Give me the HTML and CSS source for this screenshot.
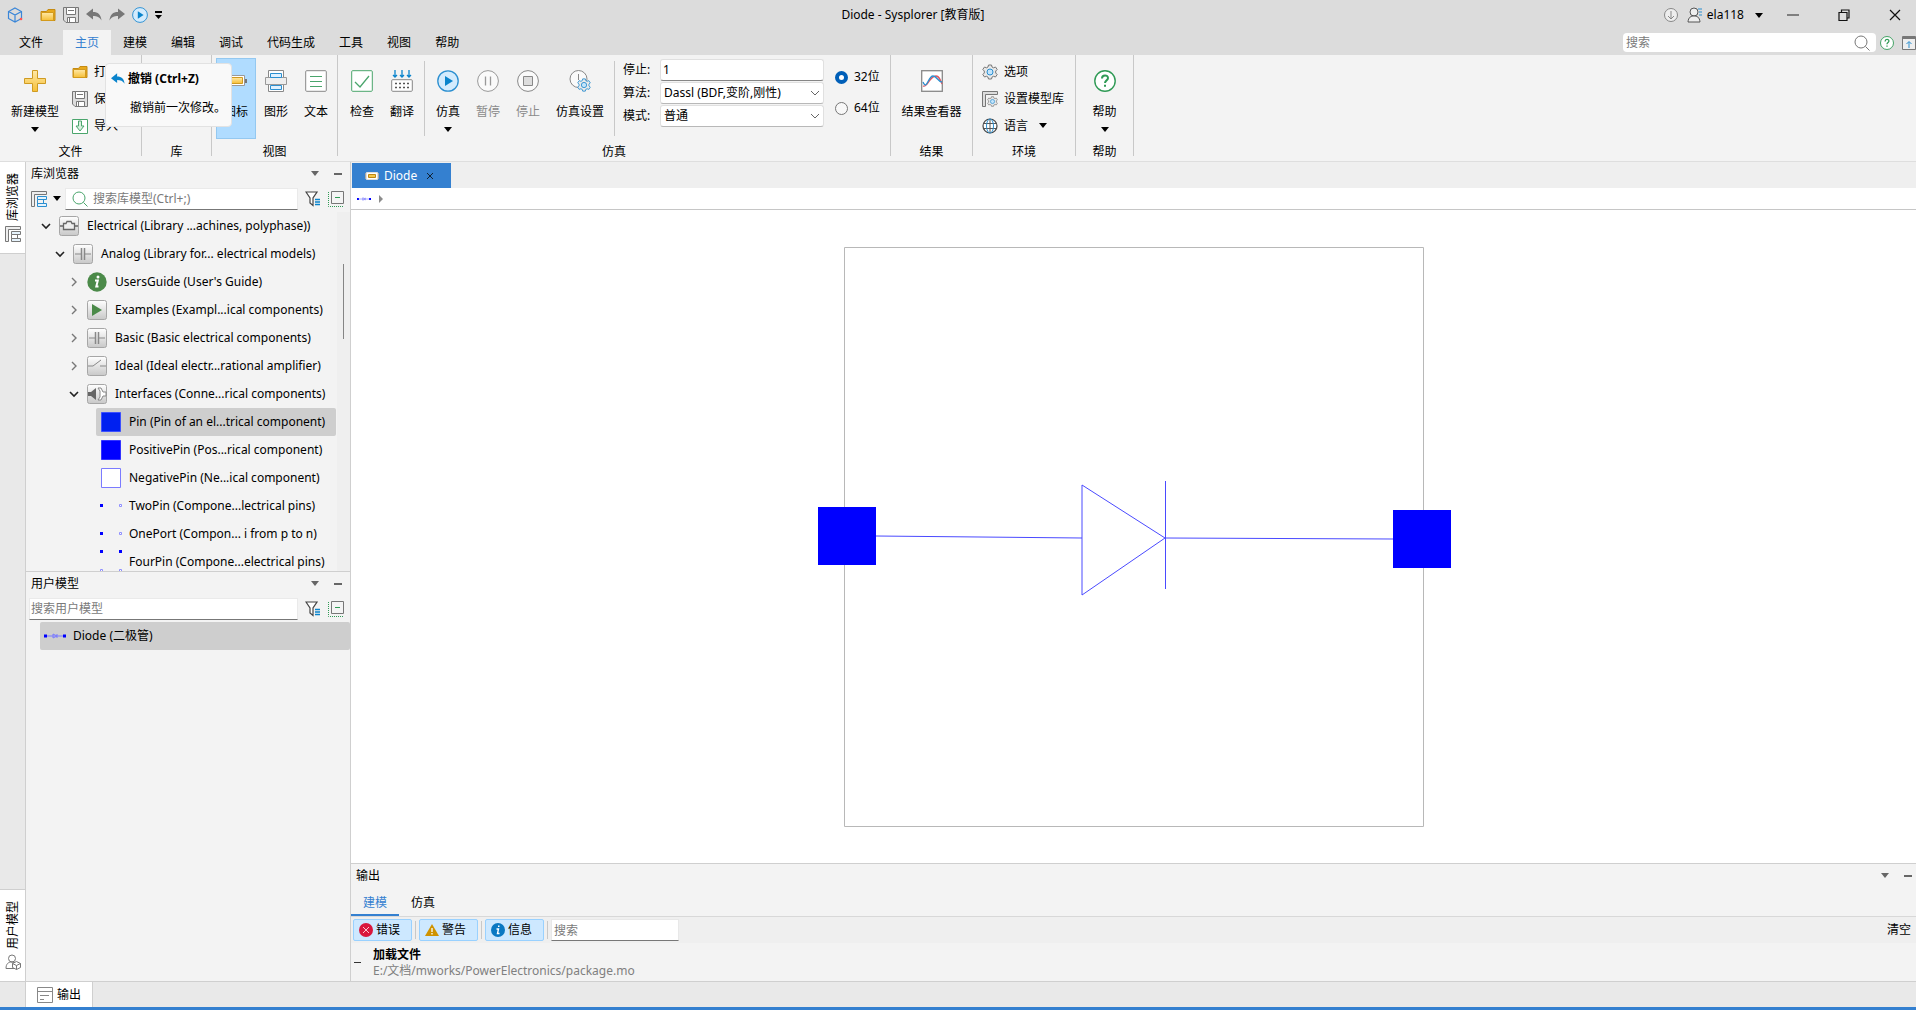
FILE: index.html
```html
<!DOCTYPE html>
<html lang="zh-CN">
<head>
    <meta charset="UTF-8">
    <meta name="viewport" content="width=device-width, initial-scale=1.0">
    <title>Diode - Sysplorer [教育版]</title>
    <link rel="stylesheet" href="styles.css">
</head>
<body>
    <!-- shared icons -->
    <svg class="sprite" aria-hidden="true">
        <defs>
            <linearGradient id="gold" x1="0" y1="0" x2="0" y2="1">
                <stop offset="0" stop-color="#ffe9a8"/>
                <stop offset="1" stop-color="#f6bf36"/>
            </linearGradient>
            <linearGradient id="grey" x1="0" y1="0" x2="0" y2="1">
                <stop offset="0" stop-color="#ffffff"/>
                <stop offset="1" stop-color="#c8c8c8"/>
            </linearGradient>
        </defs>
        <symbol id="folder" viewBox="0 0 16 16">
            <path d="M1 13.500V4.500h5.500l1.500-2h7v11z" fill="#e8a91c" stroke="#c58b12"/>
            <path d="M1.500 13.500V5.500h12v8z" fill="url(#gold)" stroke="#d39a1c"/>
        </symbol>
        <symbol id="save" viewBox="0 0 16 16">
            <path d="M.5 .5h15v15H3l-2.500-2.500z" fill="#ddd" stroke="#777"/>
            <path d="M3.500 .5h9v7h-9z" fill="#fff" stroke="#777"/>
            <path d="M4.500 15.500v-5h8v5zM6.500 11v4M5 3.500h6" fill="#fff" stroke="#777"/>
        </symbol>
        <symbol id="undo" viewBox="0 0 16 16">
            <path d="M0 7l7-5.500v3.500c5 0 8 2.500 8.500 8.500C13.500 10 11 9 7 9v3.500z" fill="currentColor"/>
        </symbol>
        <symbol id="play" viewBox="0 0 22 22">
            <circle cx="11" cy="11" r="10.200" fill="#d3ebfd" stroke="#2b8fd0" stroke-width="1.300"/>
            <path d="M8 6v10l8-5z" fill="#0a84cc"/>
        </symbol>
        <symbol id="arrow" viewBox="0 0 8 5"><path d="M0 0h8L4 5z" fill="currentColor"/></symbol>
        <symbol id="dash" viewBox="0 0 8 2"><path d="M0 0h8v2H0z" fill="currentColor"/></symbol>
        <symbol id="help" viewBox="0 0 22 22">
            <circle cx="11" cy="11" r="10.200" fill="#fff" stroke="#2f9a55" stroke-width="1.400"/>
            <path d="M8 8.500c0-4 6-4 6-.500 0 2.500-3 2.200-3 5M11 14.800v2" fill="none" stroke="#2f9a55" stroke-width="2"/>
        </symbol>
        <symbol id="gear" viewBox="0 0 16 16">
            <path d="M6.500 1h3l.5 2 1.500.800 2-.800 1.700 2.500-1.500 1.500v2l1.500 1.500-1.700 2.500-2-.700-1.500.800-.5 1.900h-3l-.5-1.900-1.500-.800-2 .700L.8 10.500 2.300 9V7L.8 5.500 2.500 3l2 .800L6 3z" fill="#e8e8e8" stroke="currentColor"/>
            <circle cx="8" cy="8" r="3" fill="#c3e4fb" stroke="#2b8fd0"/>
        </symbol>
        <symbol id="library" viewBox="0 0 16 16">
            <path d="M15.500 .5H.5v15h3v-12h12z" fill="#eee" stroke="#777"/>
            <path d="M6.500 5.500h9v3h-9zM6.500 12.500h9v3h-9z" fill="#e6f3fc" stroke="currentColor"/>
            <path d="M6.500 8.500v4h6v-4" fill="none" stroke="currentColor"/>
        </symbol>
        <symbol id="search" viewBox="0 0 16 16">
            <circle cx="7" cy="7" r="6" fill="none" stroke="currentColor"/>
            <path d="M11.500 11.500l4 4" stroke="currentColor"/>
        </symbol>
        <symbol id="filter" viewBox="0 0 16 16">
            <path d="M1 1h11L8 7v7.500L5 12V7z" fill="#fff" stroke="#444" stroke-width="1.200"/>
            <path d="M10 8.500h5M10 11h5M10 13.500h5" stroke="#0a84cc" stroke-width="1.300"/>
        </symbol>
        <symbol id="collapse" viewBox="0 0 16 16">
            <path d="M3.500 .5h12v12h-12z" fill="#f4f4f4" stroke="#777"/>
            <path d="M7 6.500h5" stroke="#2f9a55"/>
            <path d="M.5 1v14.500H15" fill="none" stroke="#2f9a55" stroke-dasharray="1 1"/>
        </symbol>
        <symbol id="open" viewBox="0 0 14 14"><path d="M3 5l4 4 4-4" fill="none" stroke="#222" stroke-width="1.600"/></symbol>
        <symbol id="closed" viewBox="0 0 14 14"><path d="M5 3l4 4-4 4" fill="none" stroke="#777" stroke-width="1.400"/></symbol>
        <symbol id="tile" viewBox="0 0 20 20"><rect x=".5" y=".5" width="19" height="19" rx="2" fill="url(#grey)" stroke="#a6a6a6"/></symbol>
        <symbol id="mini-diode" viewBox="0 0 22 8">
            <path d="M1 4h20" stroke="#7b7bff"/>
            <path d="M0 2.500h3v3H0zM19 2.500h3v3h-3z" fill="#00f"/>
            <path d="M9 2l4 2-4 2zM13 2v4" fill="none" stroke="#7b7bff"/>
        </symbol>
        <symbol id="plug" viewBox="0 0 20 20">
            <use href="#tile"/>
            <path d="M1 8h3l5-4v12l-5-4H1z" fill="#666"/>
            <path d="M11 4h3l2 4h3v4h-3l-2 4h-3l2-3V7z" fill="#fff" stroke="#888"/>
        </symbol>
        <symbol id="capacitor" viewBox="0 0 20 20">
            <use href="#tile"/>
            <path d="M2 10h6M12 10h6" stroke="#888"/>
            <path d="M8.500 4v12M11.500 4v12" stroke="#888" stroke-width="1.500"/>
        </symbol>
    </svg>

    <header class="titlebar">
        <div class="quick">
            <svg class="i16" viewBox="0 0 16 16"><path d="M8 1l6.500 3.500v7L8 15l-6.500-3.500v-7zM1.500 4.500L8 8l6.500-3.500M8 8v7" fill="none" stroke="#3a86d8" stroke-width="1.200"/><circle cx="14" cy="12" r="1.300" fill="#f55"/></svg>
            <button class="icon-btn first" aria-label="打开"><svg class="i16"><use href="#folder"/></svg></button>
            <button class="icon-btn" aria-label="保存"><svg class="i16"><use href="#save"/></svg></button>
            <button class="icon-btn muted" aria-label="撤销"><svg class="i16"><use href="#undo"/></svg></button>
            <button class="icon-btn muted flip" aria-label="重做"><svg class="i16"><use href="#undo"/></svg></button>
            <button class="icon-btn" aria-label="仿真"><svg class="i16"><use href="#play"/></svg></button>
            <button class="icon-btn" aria-label="自定义"><svg class="more" viewBox="0 0 8 8"><path d="M0 0h7v2H0zM0 4h7L3.500 8z"/></svg></button>
        </div>
        <h1 class="title">Diode - Sysplorer [教育版]</h1>
        <div class="window">
            <svg class="i16" viewBox="0 0 16 16"><circle cx="8" cy="8" r="6.500" fill="#eee" stroke="#888"/><path d="M8 4v8M5 9l3 3 3-3" fill="none" stroke="#888"/></svg>
            <button class="account">
                <svg class="i16" viewBox="0 0 16 16"><circle cx="7" cy="5" r="4" fill="#eee" stroke="#555"/><path d="M1 15c.5-5 3-6 6-6s5.500 1 6 6z" fill="#eee" stroke="#555"/><path d="M11 2h4M12 5h3M12 8h3" stroke="#2b8fd0"/></svg>
                ela118
                <svg class="arrow"><use href="#arrow"/></svg>
            </button>
            <button class="win-btn" aria-label="最小化"><svg class="i12" viewBox="0 0 12 12"><path d="M0 6h12" stroke="#222"/></svg></button>
            <button class="win-btn" aria-label="还原"><svg class="i12" viewBox="0 0 12 12"><path d="M1 3.500h8v8H1zM3.500 3V1H11v8H9.500" fill="none" stroke="#111" stroke-width="1.200"/></svg></button>
            <button class="win-btn" aria-label="关闭"><svg class="i12" viewBox="0 0 12 12"><path d="M1 1l10 10M11 1L1 11" stroke="#111" stroke-width="1.200"/></svg></button>
        </div>
    </header>

    <nav class="menubar">
        <button class="menu-item file">文件</button>
        <button class="menu-item active">主页</button>
        <button class="menu-item">建模</button>
        <button class="menu-item">编辑</button>
        <button class="menu-item">调试</button>
        <button class="menu-item">代码生成</button>
        <button class="menu-item">工具</button>
        <button class="menu-item">视图</button>
        <button class="menu-item">帮助</button>
        <div class="menu-search">
            <input type="text" placeholder="搜索" aria-label="搜索">
            <svg class="i16"><use href="#search"/></svg>
        </div>
        <button class="icon-btn" aria-label="帮助"><svg class="i14"><use href="#help"/></svg></button>
        <button class="icon-btn" aria-label="收起功能区"><svg class="i14" viewBox="0 0 14 14"><path d="M.5 .5h13v13H.5z" fill="#eee" stroke="#777"/><path d="M0 2h14" stroke="#777" stroke-width="2"/><path d="M7 12V6M4.500 8L7 5.500 9.500 8" fill="none" stroke="#2b8fd0"/></svg></button>
    </nav>

    <section class="ribbon">
        <div class="group g-file">
            <div class="tools">
                <button class="big wide">
                    <svg class="i22" viewBox="0 0 22 22"><path d="M8.500 .5h5v8h8v5h-8v8h-5v-8h-8v-5h8z" fill="url(#gold)" stroke="#cf9b22"/></svg>
                    新建模型
                    <svg class="arrow"><use href="#arrow"/></svg>
                </button>
                <div class="stack">
                    <button class="small"><svg class="i16"><use href="#folder"/></svg>打开</button>
                    <button class="small"><svg class="i16"><use href="#save"/></svg>保存</button>
                    <button class="small"><svg class="i16" viewBox="0 0 16 16"><path d="M.5 1.500h15v14H.5z" fill="#fff" stroke="#4aa56c"/><path d="M6.500 3h3v5H12l-4 5-4-5h2.500z" fill="#d9f0e0" stroke="#4aa56c"/></svg>导入</button>
                </div>
            </div>
            <div class="group-name">文件</div>
        </div>
        <div class="group g-lib">
            <div class="tools"></div>
            <div class="group-name">库</div>
        </div>
        <div class="group g-view">
            <div class="tools">
                <button class="big selected">
                    <svg class="i22" viewBox="0 0 22 22"><path d="M0 11h22" stroke="#777" stroke-width="4"/><path d="M2.500 5.500h17v10h-17z" fill="#fff" stroke="#999"/><path d="M4.500 7.500h13v6h-13z" fill="url(#gold)" stroke="#cf9b22"/></svg>
                    图标
                </button>
                <button class="big">
                    <svg class="i22" viewBox="0 0 22 22"><path d="M3.500 .5h15v21h-15z" fill="#fff" stroke="#888"/><path d="M.5 7.500h21v7H.5z" fill="#eee" stroke="#999"/><path d="M5.500 3.500h11v4h-11zM5.500 15.500h11v4h-11z" fill="#dff1ff" stroke="#2b8fd0"/></svg>
                    图形
                </button>
                <button class="big">
                    <svg class="i22" viewBox="0 0 22 22"><rect x=".7" y=".7" width="20.600" height="20.600" rx="1" fill="#fff" stroke="#888"/><path d="M5 6.500h12M5 11.500h12M5 16.500h12" stroke="#4aa56c"/></svg>
                    文本
                </button>
            </div>
            <div class="group-name">视图</div>
        </div>
        <div class="group g-sim">
            <div class="tools">
                <button class="big">
                    <svg class="i22" viewBox="0 0 22 22"><rect x=".7" y=".7" width="20.600" height="20.600" rx="1" fill="#fff" stroke="#4aa56c"/><path d="M4 12l5 5 9-11" fill="none" stroke="#4aa56c" stroke-width="1.300"/></svg>
                    检查
                </button>
                <button class="big">
                    <svg class="i22" viewBox="0 0 22 22"><path d="M4 0v7M11 0v7M18 0v7M2 5l2 2 2-2M9 5l2 2 2-2M16 5l2 2 2-2" fill="none" stroke="#0a84cc" stroke-width="1.300"/><rect x=".7" y="9.700" width="20.600" height="11.600" rx="1" fill="#fff" stroke="#888"/><path d="M4 13.500h2M8 13.500h2M12 13.500h2M16 13.500h2M4 17.500h2M8 17.500h2M12 17.500h2M16 17.500h2" stroke="#555" stroke-width="1.500"/></svg>
                    翻译
                </button>
                <div class="divider"></div>
                <button class="big">
                    <svg class="i22"><use href="#play"/></svg>
                    仿真
                    <svg class="arrow"><use href="#arrow"/></svg>
                </button>
                <button class="big" disabled>
                    <svg class="i22" viewBox="0 0 22 22"><circle cx="11" cy="11" r="10.400" fill="#fafafa" stroke="#999"/><path d="M8.500 6.500v9M13.500 6.500v9" stroke="#999" stroke-width="1.300"/></svg>
                    暂停
                </button>
                <button class="big" disabled>
                    <svg class="i22" viewBox="0 0 22 22"><circle cx="11" cy="11" r="10.400" fill="#fafafa" stroke="#888"/><path d="M6.500 6.500h9v9h-9z" fill="#ddd" stroke="#888"/></svg>
                    停止
                </button>
                <button class="big wide">
                    <svg class="i22" viewBox="0 0 22 22"><circle cx="9.500" cy="9" r="8.500" fill="#fafafa" stroke="#888"/><path d="M9.500 4v6" stroke="#888"/><svg x="8" y="8" width="14" height="14" color="#2b8fd0"><use href="#gear"/></svg></svg>
                    仿真设置
                </button>
                <div class="divider"></div>
                <div class="sim-form">
                    <label for="stop">停止:</label>
                    <input type="text" id="stop" value="1">
                    <label for="algo">算法:</label>
                    <select id="algo"><option>Dassl (BDF,变阶,刚性)</option></select>
                    <label for="mode">模式:</label>
                    <select id="mode"><option>普通</option></select>
                </div>
                <div class="bits">
                    <label><input type="radio" name="bits" checked>32位</label>
                    <label><input type="radio" name="bits">64位</label>
                </div>
            </div>
            <div class="group-name">仿真</div>
        </div>
        <div class="group g-result">
            <div class="tools">
                <button class="big full">
                    <svg class="i22" viewBox="0 0 22 22"><rect x=".7" y=".7" width="20.600" height="20.600" fill="#fff" stroke="#888" stroke-width="1.300"/><path d="M2 16c5 2 6-10 13-10 3 0 4 3 6 8" fill="none" stroke="#e0555f" stroke-width="1.300"/><path d="M2 12c4 9 5-6 10-6 4 0 5 6 9 6" fill="none" stroke="#2b8fd0" stroke-width="1.300"/></svg>
                    结果查看器
                </button>
            </div>
            <div class="group-name">结果</div>
        </div>
        <div class="group g-env">
            <div class="tools">
                <div class="stack">
                    <button class="small"><svg class="i16 grey"><use href="#gear"/></svg>选项</button>
                    <button class="small"><svg class="i16 grey" viewBox="0 0 16 16"><path d="M15.500 .5H.5v15h3v-12h12z" fill="#ddd" stroke="#777"/><svg x="5" y="5" width="11" height="11"><use href="#gear"/></svg></svg>设置模型库</button>
                    <button class="small"><svg class="i16" viewBox="0 0 16 16"><circle cx="8" cy="8" r="7" fill="#fff" stroke="#444" stroke-width="1.200"/><path d="M8 1v14M1.500 5.500h13M1.500 10.500h13" stroke="#555"/><ellipse cx="8" cy="8" rx="3.500" ry="7" fill="none" stroke="#2b8fd0"/></svg>语言<svg class="arrow lang"><use href="#arrow"/></svg></button>
                </div>
            </div>
            <div class="group-name">环境</div>
        </div>
        <div class="group g-help">
            <div class="tools">
                <button class="big full">
                    <svg class="i22"><use href="#help"/></svg>
                    帮助
                    <svg class="arrow"><use href="#arrow"/></svg>
                </button>
            </div>
            <div class="group-name">帮助</div>
        </div>

        <div class="tooltip" role="tooltip">
            <strong><svg class="i14"><use href="#undo"/></svg>撤销 (Ctrl+Z)</strong>
            <p>撤销前一次修改。</p>
        </div>
    </section>

    <main class="workspace">
        <div class="rail">
            <button class="rail-tab"><span>库浏览器</span><svg class="i16 grey"><use href="#library"/></svg></button>
            <button class="rail-tab"><span>用户模型</span><svg class="i16" viewBox="0 0 16 16"><circle cx="7" cy="4.500" r="3.500" fill="#fff" stroke="#777"/><path d="M9 14.500H1C1 10 3 8 7 8l2 .500" fill="none" stroke="#777"/><path d="M11.500 7.500l4 2v4l-4 2-4-2v-4zM7.500 9.500l4 2 4-2M11.500 11.500v4" fill="#fff" stroke="#777"/></svg></button>
        </div>

        <aside class="sidebar">
            <section class="panel">
                <div class="panel-head">
                    <h2>库浏览器</h2>
                    <button class="icon-btn" aria-label="菜单"><svg class="arrow"><use href="#arrow"/></svg></button>
                    <button class="icon-btn" aria-label="隐藏"><svg class="dash"><use href="#dash"/></svg></button>
                </div>
                <div class="panel-search">
                    <button class="icon-btn view-mode" aria-label="显示方式"><svg class="i16"><use href="#library"/></svg><svg class="arrow"><use href="#arrow"/></svg></button>
                    <div class="field">
                        <svg class="i16"><use href="#search"/></svg>
                        <input type="text" placeholder="搜索库模型(Ctrl+;)" aria-label="搜索库模型">
                    </div>
                    <button class="icon-btn" aria-label="筛选"><svg class="i16"><use href="#filter"/></svg></button>
                    <button class="icon-btn" aria-label="全部折叠"><svg class="i16"><use href="#collapse"/></svg></button>
                </div>
                <div class="tree-wrap">
                    <ul class="tree">
                        <li class="l0"><svg class="i14"><use href="#open"/></svg><svg class="i20" viewBox="0 0 20 20"><use href="#tile"/><path d="M1 10h3M16 10h3M4.500 7.500h2.500l1-2h4l1 2h2.500v6h-11z" fill="#eee" stroke="#666" stroke-width="1.300"/></svg>Electrical (Library ...achines, polyphase))</li>
                        <li class="l1"><svg class="i14"><use href="#open"/></svg><svg class="i20"><use href="#capacitor"/></svg>Analog (Library for... electrical models)</li>
                        <li class="l2"><svg class="i14"><use href="#closed"/></svg><svg class="i20" viewBox="0 0 20 20"><circle cx="10" cy="10" r="9.700" fill="#4b8a49"/><path d="M8 8.500h2.800l-1.500 6h2.200" fill="none" stroke="#fff" stroke-width="2"/><circle cx="11" cy="5" r="1.500" fill="#fff"/></svg>UsersGuide (User's Guide)</li>
                        <li class="l2"><svg class="i14"><use href="#closed"/></svg><svg class="i20" viewBox="0 0 20 20"><use href="#tile"/><path d="M5 4v12l10-6z" fill="#4b8a49"/></svg>Examples (Exampl...ical components)</li>
                        <li class="l2"><svg class="i14"><use href="#closed"/></svg><svg class="i20"><use href="#capacitor"/></svg>Basic (Basic electrical components)</li>
                        <li class="l2"><svg class="i14"><use href="#closed"/></svg><svg class="i20" viewBox="0 0 20 20"><use href="#tile"/><path d="M1 10h5l8-6M13 10h6" fill="none" stroke="#888"/></svg>Ideal (Ideal electr...rational amplifier)</li>
                        <li class="l2"><svg class="i14"><use href="#open"/></svg><svg class="i20"><use href="#plug"/></svg>Interfaces (Conne...rical components)</li>
                        <li class="leaf selected"><svg class="i20" viewBox="0 0 20 20"><path d="M.5 .5h19v19H.5z" fill="#0020f0" stroke="#3c50ff"/></svg>Pin (Pin of an el...trical component)</li>
                        <li class="leaf"><svg class="i20" viewBox="0 0 20 20"><path d="M.5 .5h19v19H.5z" fill="#00f" stroke="#33f"/></svg>PositivePin (Pos...rical component)</li>
                        <li class="leaf"><svg class="i20" viewBox="0 0 20 20"><path d="M.5 .5h19v19H.5z" fill="#fff" stroke="#7b7bff"/></svg>NegativePin (Ne...ical component)</li>
                        <li class="leaf"><svg class="i20" viewBox="0 0 20 20"><path d="M-1 8h3v3h-3z" fill="#00f"/><path d="M18.500 8.500h2v2h-2z" fill="#fff" stroke="#8f8fff"/></svg>TwoPin (Compone...lectrical pins)</li>
                        <li class="leaf"><svg class="i20" viewBox="0 0 20 20"><path d="M-1 8h3v3h-3z" fill="#00f"/><path d="M18.500 8.500h2v2h-2z" fill="#fff" stroke="#8f8fff"/></svg>OnePort (Compon... i from p to n)</li>
                        <li class="leaf"><svg class="i20" viewBox="0 0 20 20"><path d="M-1-2h3v3h-3zM18-2h3v3h-3z" fill="#00f"/><path d="M-.5 17.500h2v2h-2zM18.500 17.500h2v2h-2z" fill="#fff" stroke="#8f8fff"/></svg>FourPin (Compone...electrical pins)</li>
                    </ul>
                    <div class="scrollbar"><div class="thumb"></div></div>
                </div>
            </section>
            <section class="panel">
                <div class="panel-head">
                    <h2>用户模型</h2>
                    <button class="icon-btn" aria-label="菜单"><svg class="arrow"><use href="#arrow"/></svg></button>
                    <button class="icon-btn" aria-label="隐藏"><svg class="dash"><use href="#dash"/></svg></button>
                </div>
                <div class="panel-search">
                    <div class="field plain">
                        <input type="text" placeholder="搜索用户模型" aria-label="搜索用户模型">
                    </div>
                    <button class="icon-btn" aria-label="筛选"><svg class="i16"><use href="#filter"/></svg></button>
                    <button class="icon-btn" aria-label="全部折叠"><svg class="i16"><use href="#collapse"/></svg></button>
                </div>
                <ul class="tree user">
                    <li class="selected"><svg class="diode"><use href="#mini-diode"/></svg>Diode (二极管)</li>
                </ul>
            </section>
        </aside>

        <div class="center">
            <div class="doc-tabs">
                <div class="doc-tab">
                    <svg class="i14" viewBox="0 0 14 14"><path d="M0 7h14" stroke="#a8a8a8" stroke-width="6"/><path d="M1.500 3.500h11v7h-11z" fill="#fff" stroke="#ddd"/><path d="M3.500 5.500h7v3h-7z" fill="#f4c64a" stroke="#bd8613"/></svg>
                    Diode
                    <button class="icon-btn" aria-label="关闭"><svg class="close" viewBox="0 0 8 8"><path d="M1 1l6 6M7 1L1 7" stroke="#123"/></svg></button>
                </div>
            </div>
            <div class="crumbs">
                <svg class="i14" viewBox="0 0 22 8"><use href="#mini-diode"/></svg>
                <svg class="crumb-arrow" viewBox="0 0 4 8"><path d="M0 0v8l4-4z" fill="#8c8c8c"/></svg>
            </div>
            <div class="canvas">
                <svg class="diagram" viewBox="0 0 634 582">
                    <path d="M27.500 1.500h579v579h-579z" fill="none" stroke="#b8b8b8"/>
                    <g fill="none" stroke="#4a4aff">
                        <path d="M59 290l206 2M265 239v110L348 292zM348.500 235v108M348 292l228 1"/>
                    </g>
                    <rect x="1" y="261" width="58" height="58" fill="#00f"/>
                    <rect x="576" y="264" width="58" height="58" fill="#00f"/>
                </svg>
            </div>

            <section class="output">
                <div class="panel-head">
                    <h2>输出</h2>
                    <button class="icon-btn" aria-label="菜单"><svg class="arrow"><use href="#arrow"/></svg></button>
                    <button class="icon-btn" aria-label="隐藏"><svg class="dash"><use href="#dash"/></svg></button>
                </div>
                <div class="output-tabs">
                    <button class="active">建模</button>
                    <button>仿真</button>
                </div>
                <div class="output-bar">
                    <button class="chip"><svg class="i14" viewBox="0 0 14 14"><circle cx="7" cy="7" r="7" fill="#d9173c"/><path d="M4 4l6 6M10 4l-6 6" stroke="#ffc4cf"/></svg>错误</button>
                    <span class="sep"></span>
                    <button class="chip"><svg class="i14" viewBox="0 0 14 14"><path d="M7 1l7 12H0z" fill="#cf9200"/><path d="M7 5v4M7 10v1.500" stroke="#fff" stroke-width="1.300"/></svg>警告</button>
                    <span class="sep"></span>
                    <button class="chip"><svg class="i14" viewBox="0 0 14 14"><circle cx="7" cy="7" r="7" fill="#0a78c2"/><path d="M5.500 6H7.500L6.500 10.500H8.500M7 3.200h1.500" fill="none" stroke="#fff" stroke-width="1.400"/></svg>信息</button>
                    <span class="sep"></span>
                    <input type="text" placeholder="搜索" aria-label="搜索输出">
                    <button class="clear">清空</button>
                </div>
                <div class="log">
                    <svg class="log-dash" viewBox="0 0 7 1"><path d="M0 0h7v1H0z" fill="#333"/></svg>
                    <div>
                        <strong>加载文件</strong>
                        <p>E:/文档/mworks/PowerElectronics/package.mo</p>
                    </div>
                </div>
            </section>
        </div>
    </main>

    <footer class="statusbar">
        <button class="status-tab"><svg class="i16" viewBox="0 0 16 16"><path d="M.5 .5h15v15H.5z" fill="#fff" stroke="#888"/><path d="M1 4.500h14M3 8.500h9M3 12.500h4" stroke="#888"/></svg>输出</button>
    </footer>
</body>
</html>
```
FILE: styles.css
```css
* {
    box-sizing: border-box;
}
body {
    margin: 0;
    height: 100vh;
    display: flex;
    flex-direction: column;
    overflow: hidden;
    font-family: "Noto Sans", "Noto Sans CJK SC", sans-serif;
    font-size: 12px;
    line-height: 16px;
    color: #000;
    background-color: #f3f3f3;
}
button, input, select {
    font: inherit;
    color: inherit;
}
button {
    padding: 0;
    border: none;
    background: none;
    white-space: nowrap;
}
h1, h2, p, ul {
    margin: 0;
    padding: 0;
    font-size: 12px;
    font-weight: normal;
}
svg {
    flex: none;
    display: block;
}
input::placeholder {
    color: #7a7a7a;
    opacity: 1;
}

/* icon sizes */
.sprite { position: absolute; width: 0; height: 0; }
.i12 { width: 12px; height: 12px; }
.i14 { width: 14px; height: 14px; }
.i16 { width: 16px; height: 16px; }
.i20 { width: 20px; height: 20px; overflow: visible; }
.i22 { width: 22px; height: 22px; }
.arrow { width: 8px; height: 5px; }
.dash { width: 8px; height: 2px; }
.grey { color: #777; }
.icon-btn {
    display: flex;
    align-items: center;
}

/* title bar */
.titlebar {
    height: 30px;
    flex: none;
    display: flex;
    align-items: center;
    background-color: #dcdcdc;
}
.quick {
    display: flex;
    align-items: center;
    gap: 7px;
    padding-left: 7px;
}
.quick .first {
    margin-left: 10px;
}
.muted {
    color: #777;
}
.flip {
    transform: scaleX(-1);
}
.more {
    width: 8px;
    height: 8px;
}
.title {
    flex: 1;
    text-align: center;
}
.window {
    display: flex;
    align-items: center;
}
.account {
    display: flex;
    align-items: center;
    gap: 4px;
    padding: 0 4px 0 8px;
}
.account .arrow {
    margin-left: 7px;
}
.win-btn {
    width: 51px;
    height: 30px;
    display: flex;
    align-items: center;
    justify-content: center;
}
.win-btn:last-child {
    padding-left: 4px;
    width: 47px;
}

/* menu */
.menubar {
    height: 25px;
    flex: none;
    display: flex;
    align-items: center;
    background-color: #dcdcdc;
}
.menu-item {
    height: 25px;
    padding: 0 12px;
}
.menu-item.file {
    padding: 0 20px 0 19px;
}
.menu-item.active {
    background-color: #f3f3f3;
    color: #3480d0;
}
.menu-search {
    width: 253px;
    height: 19px;
    margin-left: auto;
    padding: 0 6px 0 3px;
    display: flex;
    align-items: center;
    background-color: #fff;
    border-radius: 4px;
    color: #777;
}
.menu-search input {
    flex: 1;
    min-width: 0;
    padding: 0;
    border: none;
    background: none;
}
.menubar .icon-btn {
    margin-left: 4px;
}
.menubar .icon-btn:last-child {
    margin-left: 8px;
}

/* ribbon */
.ribbon {
    position: relative;
    flex: none;
    display: flex;
    height: 107px;
    border-bottom: 1px solid #dedede;
}
.group {
    height: 101px;
    display: flex;
    flex-direction: column;
    border-right: 1px solid #c8c8c8;
}
.g-file { width: 142px; }
.g-lib { width: 70px; }
.g-view { width: 126px; }
.g-sim { width: 553px; }
.g-result { width: 82px; }
.g-env { width: 103px; }
.g-help { width: 58px; }
.tools {
    flex: 1;
    display: flex;
    align-items: flex-start;
    padding-top: 3px;
}
.group-name {
    height: 16px;
    margin-bottom: -4px;
    text-align: center;
}
.big {
    width: 40px;
    height: 81px;
    padding-top: 11px;
    border: 1px solid transparent;
    display: flex;
    flex-direction: column;
    align-items: center;
    gap: 12px;
}
.big .arrow {
    margin-top: -5px;
}
.big:disabled {
    color: #8a8a8a;
}
.big.wide {
    width: 64px;
}
.big.full {
    width: 100%;
}
.big.selected {
    background-color: #b0dcff;
    border-color: #94c8f0;
}
.g-file .wide {
    width: 70px;
}
.g-view .tools,
.g-sim .tools {
    padding-left: 4px;
}
.stack {
    display: flex;
    flex-direction: column;
    padding-left: 2px;
}
.small {
    height: 27px;
    display: flex;
    align-items: center;
    gap: 6px;
}
.g-env .stack {
    padding-left: 9px;
}
.lang {
    margin-left: 5px;
}
.divider {
    width: 1px;
    height: 75px;
    margin: 3px 3px 0 2px;
    background-color: #c8c8c8;
}
.sim-form {
    width: 201px;
    margin-left: 5px;
    display: grid;
    grid-template-columns: 37px 1fr;
    grid-auto-rows: 23px;
    align-items: center;
}
.sim-form input,
.sim-form select {
    width: 100%;
    height: 22px;
    padding: 0 3px;
    border: 1px solid #e0e0e0;
    border-bottom-color: #b8b8b8;
    border-radius: 3px;
    background-color: #fff;
}
.sim-form input {
    padding-left: 2px;
    border-bottom-color: #868686;
}
.sim-form select {
    appearance: none;
    background: #fff url("data:image/svg+xml,%3Csvg xmlns='http://www.w3.org/2000/svg' viewBox='0 0 10 6'%3E%3Cpath d='M1 1l4 4 4-4' fill='none' stroke='%23666'/%3E%3C/svg%3E") no-repeat right 3px center / 10px 6px;
}
.bits {
    margin: 4px 0 0 11px;
    display: flex;
    flex-direction: column;
    gap: 1px;
}
.bits label {
    height: 30px;
    display: flex;
    align-items: center;
    gap: 6px;
}
.bits input {
    appearance: none;
    width: 13px;
    height: 13px;
    margin: 0;
    border: 1px solid #777;
    border-radius: 50%;
    background-color: #f8f8f8;
}
.bits input:checked {
    border: 4px solid #005fb8;
    background-color: #fff;
}

/* hover tip over the ribbon */
.tooltip {
    position: absolute;
    left: 105px;
    top: 8px;
    width: 127px;
    height: 64px;
    padding: 7px 0 0 5px;
    background-color: #f9f9f9;
    border: 1px solid #e2e2e2;
    border-radius: 4px;
}
.tooltip strong {
    display: flex;
    align-items: center;
    gap: 3px;
    white-space: nowrap;
}
.tooltip strong svg {
    color: #0a84cc;
}
.tooltip p {
    margin: 13px 0 0 19px;
    white-space: nowrap;
}

/* workspace */
.workspace {
    flex: 1;
    min-height: 0;
    display: flex;
}
.rail {
    width: 26px;
    flex: none;
    display: flex;
    flex-direction: column;
    justify-content: space-between;
    background-color: #e9e9e9;
    border-right: 1px solid #cfcfcf;
}
.rail-tab {
    height: 92px;
    display: flex;
    flex-direction: column;
    align-items: center;
    justify-content: center;
    gap: 4px;
    background-color: #fff;
    border-bottom: 1px solid #cfcfcf;
}
.rail-tab:last-child {
    border-top: 1px solid #cfcfcf;
    border-bottom: none;
}
.rail-tab span {
    writing-mode: vertical-rl;
    text-orientation: sideways;
    transform: rotate(180deg);
}
.sidebar {
    width: 325px;
    flex: none;
    display: flex;
    flex-direction: column;
    border-right: 1px solid #cfcfcf;
}
.panel {
    flex: 1;
    min-height: 0;
    display: flex;
    flex-direction: column;
}
.panel + .panel {
    border-top: 1px solid #cfcfcf;
}
.panel-head {
    height: 23px;
    flex: none;
    display: flex;
    align-items: center;
    gap: 15px;
    padding: 0 8px 0 5px;
    color: #666;
}
.panel-head h2 {
    flex: 1;
    color: #000;
}
.panel-search {
    flex: none;
    display: flex;
    align-items: center;
    gap: 7px;
    height: 27px;
    padding: 0 6px 0 5px;
    color: #000;
}
.view-mode {
    gap: 6px;
    margin-right: -3px;
    color: #2b8fd0;
}
.view-mode .arrow {
    color: #000;
}
.field {
    flex: 1;
    min-width: 0;
    height: 22px;
    display: flex;
    align-items: center;
    gap: 5px;
    padding-left: 6px;
    background-color: #fff;
    border: 1px solid #eaeaea;
    border-bottom-color: #777;
    color: #4aa56c;
}
.field.plain {
    margin-left: -2px;
    padding-left: 1px;
}
.field input {
    flex: 1;
    min-width: 0;
    padding: 0;
    border: none;
    background: none;
    color: #000;
}
.tree-wrap {
    flex: 1;
    min-height: 0;
    display: flex;
}
.tree {
    flex: 1;
    overflow: hidden;
    list-style: none;
}
.tree li {
    height: 28px;
    display: flex;
    align-items: center;
    white-space: nowrap;
}
.tree .i14 {
    margin-right: 6px;
}
.tree .i20 {
    margin-right: 8px;
}
.l0 { padding-left: 13px; }
.l1 { padding-left: 27px; }
.l2 { padding-left: 41px; }
.tree .leaf {
    margin-left: 70px;
    padding-left: 5px;
}
.tree .selected {
    background-color: #cecece;
    border-radius: 2px;
}
.tree.user li {
    margin-left: 14px;
    padding-left: 4px;
    gap: 7px;
}
.diode {
    width: 22px;
    height: 8px;
}
.scrollbar {
    width: 13px;
    flex: none;
    margin-left: 1px;
    padding: 52px 0 0 6px;
    background-color: #efefef;
}
.thumb {
    width: 1px;
    height: 75px;
    background-color: #858585;
}

/* document area */
.center {
    flex: 1;
    min-width: 0;
    display: flex;
    flex-direction: column;
}
.doc-tabs {
    height: 26px;
    flex: none;
    display: flex;
    padding: 1px 0 0 1px;
    background-color: #efefef;
}
.doc-tab {
    display: flex;
    align-items: center;
    gap: 5px;
    padding: 0 17px 0 13px;
    background-color: #3480d0;
    color: #fff;
}
.close {
    width: 8px;
    height: 8px;
    margin-left: 4px;
}
.crumbs {
    height: 22px;
    flex: none;
    display: flex;
    align-items: center;
    gap: 8px;
    padding-left: 6px;
    background-color: #fff;
    border-bottom: 1px solid #c6c6c6;
}
.crumb-arrow {
    width: 4px;
    height: 8px;
}
.canvas {
    flex: 1;
    min-height: 0;
    display: flex;
    align-items: center;
    justify-content: center;
    background-color: #fff;
}
.diagram {
    width: 634px;
    height: 582px;
}

/* output */
.output {
    flex: none;
    border-top: 1px solid #cfcfcf;
}
.output .panel-head {
    padding-right: 4px;
}
.output-tabs {
    height: 30px;
    display: flex;
    border-bottom: 1px solid #d8d8d8;
}
.output-tabs button {
    padding: 4px 12px 0;
    border-bottom: 2px solid transparent;
}
.output-tabs .active {
    color: #3480d0;
    border-bottom-color: #3480d0;
}
.output-bar {
    height: 26px;
    display: flex;
    align-items: center;
    padding: 0 5px 0 2px;
    background-color: #efefef;
}
.chip {
    height: 22px;
    width: 59px;
    display: flex;
    align-items: center;
    gap: 3px;
    padding-left: 5px;
    background-color: #cde8ff;
    border: 1px solid #99d1ff;
    border-radius: 2px;
}
.sep {
    width: 1px;
    height: 18px;
    margin: 0 3px;
    background-color: #c8c8c8;
}
.output-bar input {
    width: 128px;
    height: 22px;
    padding: 0 2px;
    border: 1px solid #e8e8e8;
    border-bottom-color: #777;
    background-color: #fff;
}
.clear {
    margin-left: auto;
}
.log {
    height: 38px;
    display: flex;
    gap: 12px;
    padding: 4px 0 0 3px;
}
.log-dash {
    width: 7px;
    height: 1px;
    margin-top: 15px;
}
.log p {
    color: #808080;
}

/* status bar */
.statusbar {
    height: 29px;
    flex: none;
    padding-left: 25px;
    background-color: #e9e9e9;
    border-top: 1px solid #cfcfcf;
    border-bottom: 3px solid #3480d0;
}
.status-tab {
    height: 25px;
    display: flex;
    align-items: center;
    gap: 4px;
    padding: 0 11px;
    background-color: #fff;
    border: 1px solid #cfcfcf;
    border-width: 0 1px;
}
```
